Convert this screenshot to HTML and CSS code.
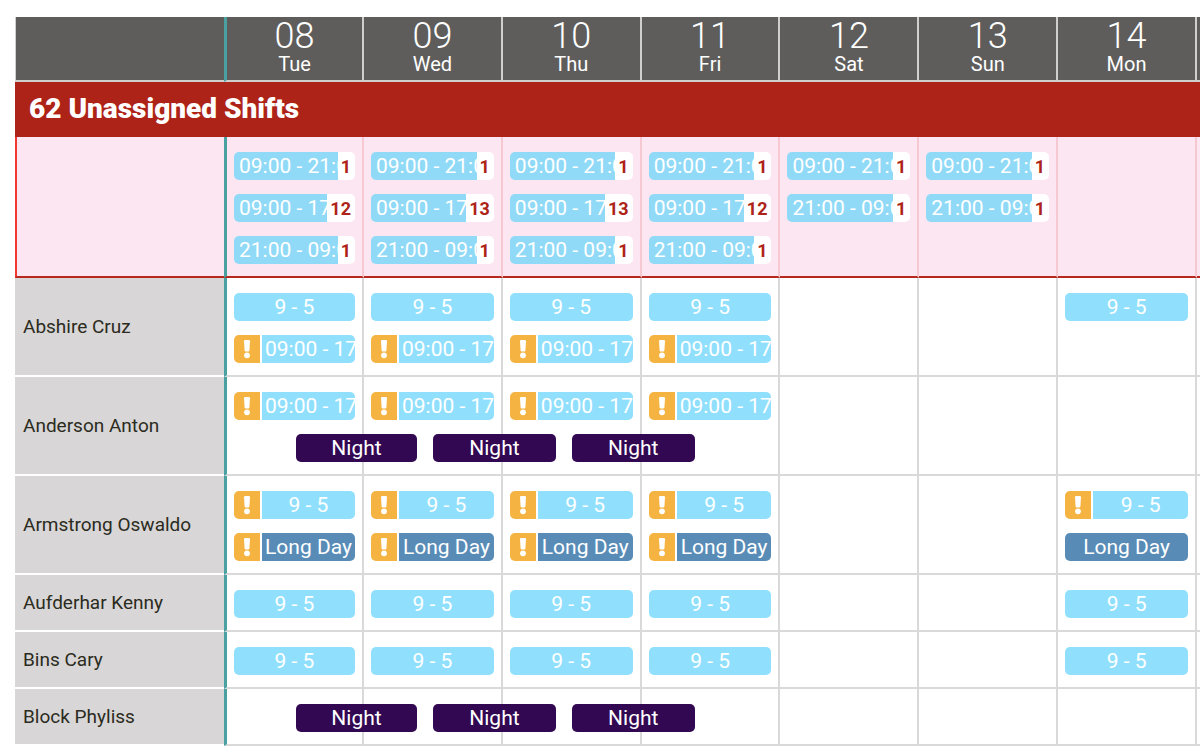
FILE: index.html
```html
<!DOCTYPE html>
<html lang="en">
<head>
<meta charset="utf-8">
<title>Shift roster</title>
<link rel="stylesheet" href="styles.css">
</head>
<body>
<svg class="sprite" aria-hidden="true">
  <symbol id="alert" viewBox="0 0 26 28">
    <path d="M10 6.3Q10 5 11.200 5H14.800Q16 5 16 6.300L15.400 15.500Q15.300 16.600 14.300 16.600H11.700Q10.700 16.600 10.600 15.500Z"/>
    <circle cx="13" cy="20.300" r="2.900"/>
  </symbol>
</svg>
<table class="roster">
  <colgroup>
    <col class="col-name"><col class="col-first"><col><col><col><col><col><col><col class="col-edge">
  </colgroup>
  <thead>
    <tr>
      <td></td>
      <th scope="col"><span class="date">08</span><span class="day">Tue</span></th>
      <th scope="col"><span class="date">09</span><span class="day">Wed</span></th>
      <th scope="col"><span class="date">10</span><span class="day">Thu</span></th>
      <th scope="col"><span class="date">11</span><span class="day">Fri</span></th>
      <th scope="col"><span class="date">12</span><span class="day">Sat</span></th>
      <th scope="col"><span class="date">13</span><span class="day">Sun</span></th>
      <th scope="col"><span class="date">14</span><span class="day">Mon</span></th>
      <td></td>
    </tr>
  </thead>
  <tbody class="unassigned">
    <tr><th class="banner" colspan="9">62 Unassigned Shifts</th></tr>
    <tr>
      <td></td>
      <td><div class="stack">
        <div class="shift"><span class="label">09:00 - 21:00</span><b class="count">1</b></div>
        <div class="shift"><span class="label">09:00 - 17:00</span><b class="count">12</b></div>
        <div class="shift"><span class="label">21:00 - 09:00</span><b class="count">1</b></div>
      </div></td>
      <td><div class="stack">
        <div class="shift"><span class="label">09:00 - 21:00</span><b class="count">1</b></div>
        <div class="shift"><span class="label">09:00 - 17:00</span><b class="count">13</b></div>
        <div class="shift"><span class="label">21:00 - 09:00</span><b class="count">1</b></div>
      </div></td>
      <td><div class="stack">
        <div class="shift"><span class="label">09:00 - 21:00</span><b class="count">1</b></div>
        <div class="shift"><span class="label">09:00 - 17:00</span><b class="count">13</b></div>
        <div class="shift"><span class="label">21:00 - 09:00</span><b class="count">1</b></div>
      </div></td>
      <td><div class="stack">
        <div class="shift"><span class="label">09:00 - 21:00</span><b class="count">1</b></div>
        <div class="shift"><span class="label">09:00 - 17:00</span><b class="count">12</b></div>
        <div class="shift"><span class="label">21:00 - 09:00</span><b class="count">1</b></div>
      </div></td>
      <td><div class="stack">
        <div class="shift"><span class="label">09:00 - 21:00</span><b class="count">1</b></div>
        <div class="shift"><span class="label">21:00 - 09:00</span><b class="count">1</b></div>
      </div></td>
      <td><div class="stack">
        <div class="shift"><span class="label">09:00 - 21:00</span><b class="count">1</b></div>
        <div class="shift"><span class="label">21:00 - 09:00</span><b class="count">1</b></div>
      </div></td>
      <td></td>
      <td></td>
    </tr>
  </tbody>
  <tbody class="staff">
    <tr>
      <th scope="row">Abshire Cruz</th>
      <td><div class="stack">
        <div class="shift"><span class="label">9 - 5</span></div>
        <div class="shift"><svg class="alert"><use href="#alert"/></svg><span class="label">09:00 - 17:00</span></div>
      </div></td>
      <td><div class="stack">
        <div class="shift"><span class="label">9 - 5</span></div>
        <div class="shift"><svg class="alert"><use href="#alert"/></svg><span class="label">09:00 - 17:00</span></div>
      </div></td>
      <td><div class="stack">
        <div class="shift"><span class="label">9 - 5</span></div>
        <div class="shift"><svg class="alert"><use href="#alert"/></svg><span class="label">09:00 - 17:00</span></div>
      </div></td>
      <td><div class="stack">
        <div class="shift"><span class="label">9 - 5</span></div>
        <div class="shift"><svg class="alert"><use href="#alert"/></svg><span class="label">09:00 - 17:00</span></div>
      </div></td>
      <td></td>
      <td></td>
      <td><div class="stack">
        <div class="shift"><span class="label">9 - 5</span></div>
      </div></td>
      <td></td>
    </tr>
    <tr>
      <th scope="row">Anderson Anton</th>
      <td><div class="stack">
        <div class="shift"><svg class="alert"><use href="#alert"/></svg><span class="label">09:00 - 17:00</span></div>
        <div class="shift night"><span class="label">Night</span></div>
      </div></td>
      <td><div class="stack">
        <div class="shift"><svg class="alert"><use href="#alert"/></svg><span class="label">09:00 - 17:00</span></div>
        <div class="shift night"><span class="label">Night</span></div>
      </div></td>
      <td><div class="stack">
        <div class="shift"><svg class="alert"><use href="#alert"/></svg><span class="label">09:00 - 17:00</span></div>
        <div class="shift night"><span class="label">Night</span></div>
      </div></td>
      <td><div class="stack">
        <div class="shift"><svg class="alert"><use href="#alert"/></svg><span class="label">09:00 - 17:00</span></div>
      </div></td>
      <td></td>
      <td></td>
      <td></td>
      <td></td>
    </tr>
    <tr>
      <th scope="row">Armstrong Oswaldo</th>
      <td><div class="stack">
        <div class="shift"><svg class="alert"><use href="#alert"/></svg><span class="label">9 - 5</span></div>
        <div class="shift long"><svg class="alert"><use href="#alert"/></svg><span class="label">Long Day</span></div>
      </div></td>
      <td><div class="stack">
        <div class="shift"><svg class="alert"><use href="#alert"/></svg><span class="label">9 - 5</span></div>
        <div class="shift long"><svg class="alert"><use href="#alert"/></svg><span class="label">Long Day</span></div>
      </div></td>
      <td><div class="stack">
        <div class="shift"><svg class="alert"><use href="#alert"/></svg><span class="label">9 - 5</span></div>
        <div class="shift long"><svg class="alert"><use href="#alert"/></svg><span class="label">Long Day</span></div>
      </div></td>
      <td><div class="stack">
        <div class="shift"><svg class="alert"><use href="#alert"/></svg><span class="label">9 - 5</span></div>
        <div class="shift long"><svg class="alert"><use href="#alert"/></svg><span class="label">Long Day</span></div>
      </div></td>
      <td></td>
      <td></td>
      <td><div class="stack">
        <div class="shift"><svg class="alert"><use href="#alert"/></svg><span class="label">9 - 5</span></div>
        <div class="shift long"><span class="label">Long Day</span></div>
      </div></td>
      <td></td>
    </tr>
    <tr>
      <th scope="row">Aufderhar Kenny</th>
      <td><div class="stack"><div class="shift"><span class="label">9 - 5</span></div></div></td>
      <td><div class="stack"><div class="shift"><span class="label">9 - 5</span></div></div></td>
      <td><div class="stack"><div class="shift"><span class="label">9 - 5</span></div></div></td>
      <td><div class="stack"><div class="shift"><span class="label">9 - 5</span></div></div></td>
      <td></td>
      <td></td>
      <td><div class="stack"><div class="shift"><span class="label">9 - 5</span></div></div></td>
      <td></td>
    </tr>
    <tr>
      <th scope="row">Bins Cary</th>
      <td><div class="stack"><div class="shift"><span class="label">9 - 5</span></div></div></td>
      <td><div class="stack"><div class="shift"><span class="label">9 - 5</span></div></div></td>
      <td><div class="stack"><div class="shift"><span class="label">9 - 5</span></div></div></td>
      <td><div class="stack"><div class="shift"><span class="label">9 - 5</span></div></div></td>
      <td></td>
      <td></td>
      <td><div class="stack"><div class="shift"><span class="label">9 - 5</span></div></div></td>
      <td></td>
    </tr>
    <tr>
      <th scope="row">Block Phyliss</th>
      <td><div class="stack"><div class="shift night"><span class="label">Night</span></div></div></td>
      <td><div class="stack"><div class="shift night"><span class="label">Night</span></div></div></td>
      <td><div class="stack"><div class="shift night"><span class="label">Night</span></div></div></td>
      <td></td>
      <td></td>
      <td></td>
      <td></td>
      <td></td>
    </tr>
  </tbody>
</table>
</body>
</html>
```
FILE: styles.css
```css
* {
  box-sizing: border-box;
}

body {
  margin: 0;
  padding: 17px 0 0 15px;
  background: #fff;
  color: #2b2b20;
  font-family: Roboto, "Liberation Sans", sans-serif;
  font-size: 19px;
}

.sprite {
  position: absolute;
  width: 0;
  height: 0;
}

.roster {
  width: 100%;
  table-layout: fixed;
  border-collapse: separate;
  border-spacing: 0;
}

.col-name { width: 209px; }
.col-first { width: 140px; }
.col-edge { width: 3px; }

.roster td,
.roster th {
  padding: 0;
  border: 0 solid #d9d9d9;
  border-width: 0 2px 2px 0;
  vertical-align: top;
  font-weight: 400;
}

.roster td:first-child,
.roster th:first-child {
  border-right-width: 0;
}

.roster td:last-child {
  border-right-width: 0;
}

.roster td:nth-child(2),
.roster th:nth-child(2) {
  border-left: 3px solid #4aa1a1;
}

/* Day headings */
.roster thead td,
.roster thead th {
  height: 65px;
  border-color: #cfcfce;
  background: #5e5d5b;
  color: #fff;
}

.roster thead td:first-child {
  border-left: 1px solid #cfcfce;
}

.roster thead th:nth-child(2) {
  border-left-color: #4aa1a1;
}

.date,
.day {
  display: block;
  text-align: center;
}

.date {
  padding-top: 2px;
  font-size: 36px;
  font-weight: 300;
  line-height: 35px;
}

.day {
  font-size: 20px;
  font-weight: 400;
  line-height: 20px;
}

/* Unassigned shifts */
.roster .banner {
  height: 55px;
  padding-left: 14px;
  border: 0;
  background: #ae2317;
  color: #fff;
  font-size: 28px;
  font-weight: 900;
  line-height: 54px;
  text-align: left;
}

.unassigned td {
  height: 141px;
  background: #fbe6f1;
}

.roster .unassigned td {
  border-right-color: #f6c8d2;
  border-bottom-color: #b8281f;
}

.roster .unassigned td:first-child {
  border-left: 2px solid #f0382f;
}

.unassigned .shift {
  --fill: #90daf7;
}

.unassigned .label {
  display: block;
  padding: 0 0 0 5px;
}

.count {
  padding: 0 4px 0 3px;
  background: #fff;
  color: #ae2317;
  font-size: 18px;
  font-weight: 700;
  line-height: 30px;
}

/* Staff rows */
.staff tr {
  height: 57px;
}

.staff th {
  background: #d8d6d7;
  text-align: left;
}

.roster .staff th {
  padding-left: 8px;
  border-bottom-color: #fff;
  vertical-align: middle;
}

.stack {
  display: flex;
  flex-direction: column;
  gap: 14px;
  padding: 15px 7px 12px;
}

.shift {
  --fill: #90e0fd;
  display: flex;
  gap: 2px;
  height: 28px;
  border-radius: 5px;
  overflow: hidden;
  color: #fff;
  font-size: 21px;
  line-height: 28px;
  white-space: nowrap;
}

.unassigned .shift {
  gap: 0;
}

.label {
  flex: 1;
  min-width: 0;
  display: flex;
  justify-content: safe center;
  padding-left: 3px;
  padding-right: 3px;
  overflow: hidden;
  background: var(--fill);
}

.alert {
  flex: none;
  width: 26px;
  height: 28px;
  background: #f5b342;
  fill: #fff;
}

.long {
  --fill: #588cb7;
}

/* Night shifts run past midnight into the following day's cell */
.night {
  --fill: #330852;
  position: relative;
  z-index: 1;
  margin-left: 62px;
  margin-right: -62px;
}
```
